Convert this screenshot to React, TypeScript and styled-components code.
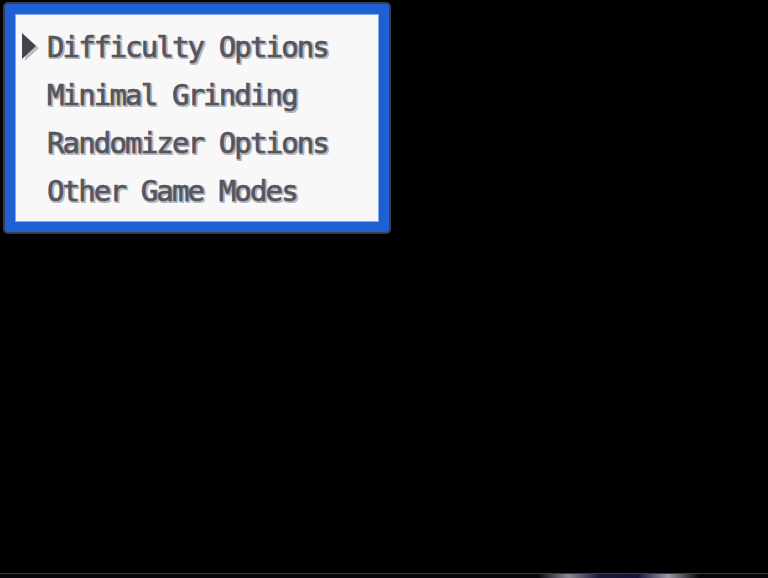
import styled, { createGlobalStyle } from "styled-components";

const GlobalStyle = createGlobalStyle`
  html, body {
    margin: 0;
    padding: 0;
    background: #000;
  }
  #root {
    width: 768px;
    height: 578px;
  }
`;

const Screen = styled.div`
  position: relative;
  width: 768px;
  height: 578px;
  background: #000;
  overflow: hidden;
  padding: 4px 0 0 5px;
  box-sizing: border-box;
`;

const MenuWindow = styled.div`
  width: 364px;
  box-sizing: content-box;
  border: 10px solid #1f5fd4;
  border-radius: 3px;
  background: #f8f8f8;
  box-shadow:
    inset 0 0 0 1px #7ea8ec,
    0 0 0 2px #3a3f4c;
  padding: 9px 0 7px;
`;

const MenuList = styled.ul`
  list-style: none;
  margin: 0;
  padding: 0;
`;

const MenuRow = styled.li`
  display: flex;
  align-items: center;
  height: 48px;
`;

const CursorSlot = styled.div`
  width: 32px;
  display: flex;
  justify-content: flex-end;
  padding-right: 8px;
  box-sizing: border-box;
`;

const Label = styled.span`
  font-family: "DejaVu Sans Mono", "Liberation Mono", monospace;
  font-size: 29px;
  line-height: 1;
  color: #55555d;
  text-shadow: 2px 2px 0 #b4b4bc, 2px 0 0 #c0c0c8, 0 2px 0 #c0c0c8;
  letter-spacing: -1.85px;
  white-space: nowrap;
  -webkit-text-stroke: 0.6px #55555d;
`;

const Glow = styled.div`
  position: absolute;
  left: 0;
  right: 0;
  bottom: 0;
  height: 4px;
  border-top: 1px solid #3a3a44;
  background: linear-gradient(
    90deg,
    #05050a 0%,
    #05050a 70%,
    #8a8898 74%,
    #1a1838 78%,
    #14123a 83%,
    #9a98a8 87%,
    #05050a 91%,
    #05050a 100%
  );
`;

const Arrow = () => (
  <svg width="18" height="30" viewBox="0 0 18 30">
    <polygon points="4,4 18,16 4,29" fill="#bcbcc4" />
    <polygon points="1,1 15,14 1,27" fill="#44444a" />
  </svg>
);

const items = [
  "Difficulty Options",
  "Minimal Grinding",
  "Randomizer Options",
  "Other Game Modes",
];

export default function App() {
  const selected = 0;
  return (
    <>
      <GlobalStyle />
      <Screen>
        <MenuWindow>
          <MenuList>
            {items.map((item, i) => (
              <MenuRow key={item}>
                <CursorSlot>{i === selected && <Arrow />}</CursorSlot>
                <Label>{item}</Label>
              </MenuRow>
            ))}
          </MenuList>
        </MenuWindow>
        <Glow />
      </Screen>
    </>
  );
}
